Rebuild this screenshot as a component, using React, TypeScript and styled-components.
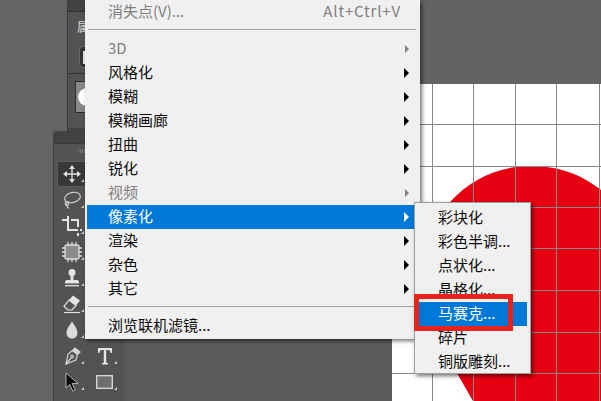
import React from 'react'
import styled, { createGlobalStyle } from 'styled-components'

const GlobalStyle = createGlobalStyle`
	html, body {
		margin: 0;
		padding: 0;
		background: #646464;
	}
	body {
		font-family: 'Noto Sans CJK SC', 'Liberation Sans', sans-serif;
	}
`

type MenuEntry = {
	label: string
	shortcut?: string
	disabled?: boolean
	arrow?: boolean
	active?: boolean
	divider?: boolean
}

const filterMenu: MenuEntry[] = [
	{ label: '消失点(V)...', shortcut: 'Alt+Ctrl+V', disabled: true },
	{ label: '', divider: true },
	{ label: '3D', disabled: true, arrow: true },
	{ label: '风格化', arrow: true },
	{ label: '模糊', arrow: true },
	{ label: '模糊画廊', arrow: true },
	{ label: '扭曲', arrow: true },
	{ label: '锐化', arrow: true },
	{ label: '视频', disabled: true, arrow: true },
	{ label: '像素化', arrow: true, active: true },
	{ label: '渲染', arrow: true },
	{ label: '杂色', arrow: true },
	{ label: '其它', arrow: true },
	{ label: '', divider: true },
	{ label: '浏览联机滤镜...' }
]

const pixelateMenu: MenuEntry[] = [
	{ label: '彩块化' },
	{ label: '彩色半调...' },
	{ label: '点状化...' },
	{ label: '晶格化...' },
	{ label: '马赛克...', active: true },
	{ label: '碎片' },
	{ label: '铜版雕刻...' }
]

const MoveIcon = () => (
	<svg width="20" height="20" viewBox="0 0 20 20" fill="#e0e0e0">
		<path d="M9.300 5h1.400v4.300H15v1.400h-4.300V15H9.300v-4.300H5V9.300h4.300z" />
		<path d="M10 1l3 4H7zM10 19l-3-4h6zM1 10l4-3v6zM19 10l-4 3V7z" />
	</svg>
)

const LassoIcon = () => (
	<svg width="20" height="20" viewBox="0 0 20 20" fill="none" stroke="#cfcfcf" strokeWidth="1.2">
		<ellipse cx="10.500" cy="7.500" rx="8" ry="5" transform="rotate(-14 10.500 7.500)" />
		<circle cx="5" cy="13.500" r="1.800" />
		<path d="M5 13c-1 2 0 4 2 5.500" />
	</svg>
)

const CropIcon = () => (
	<svg width="22" height="22" viewBox="0 0 22 22" fill="#e4e4e4">
		<path d="M1 4h5V1h2v13h9v2H6V6H1z" />
		<path d="M10 4h8v8h-2V6h-6zM16 18h2v3h-2zM19 14h2v2h-2z" />
	</svg>
)

const MarqueeIcon = () => (
	<svg width="20" height="20" viewBox="0 0 20 20">
		<rect x="3" y="3" width="14" height="14" rx="2" fill="#8c8c8c" />
		<rect x="3" y="3" width="14" height="14" rx="2" fill="none" stroke="#dedede" strokeWidth="1.300" />
		<path
			d="M0 6h3M0 10h3M0 14h3M17 6h3M17 10h3M17 14h3M6 0v3M10 0v3M14 0v3M6 17v3M10 17v3M14 17v3"
			stroke="#dedede"
			strokeWidth="1.300"
		/>
	</svg>
)

const StampIcon = () => (
	<svg width="20" height="20" viewBox="0 0 20 20" fill="#e4e4e4">
		<circle cx="10" cy="4.500" r="3.500" />
		<rect x="8.500" y="7" width="3" height="5" />
		<path d="M3 15.500v-1.500c0-1 .8-2 2-2h10c1.200 0 2 1 2 2v1.500z" />
		<rect x="3" y="17" width="14" height="1.300" />
	</svg>
)

const EraserIcon = () => (
	<svg width="22" height="22" viewBox="0 0 22 22">
		<path d="M12 2.500l7 5-4 5-7-5.500z" fill="#e4e4e4" />
		<path d="M8 7l7 5.500-4 4.500H7l-4-3.500z" fill="#555" stroke="#e4e4e4" strokeWidth="1.200" />
		<path d="M3 19.500h16" stroke="#e4e4e4" strokeWidth="1.100" />
	</svg>
)

const DropIcon = () => (
	<svg width="20" height="20" viewBox="0 0 20 20" fill="#dcdcdc">
		<path d="M10 1c1 3 5.500 7 5.500 12a5.500 5.500 0 0 1-11 0C4.500 8 9 4 10 1z" />
	</svg>
)

const PenIcon = () => (
	<svg width="20" height="20" viewBox="0 0 20 20" fill="none" stroke="#d4d4d4" strokeWidth="1.200">
		<path d="M13 2l5 4-2.500 2.500-5-4z" fill="#d4d4d4" />
		<path d="M10.500 4.500l5 4-1.500 5.500-10 4 2-10z" />
		<path d="M4 18l5-6" />
		<circle cx="10" cy="10.500" r="1.300" />
	</svg>
)

const TextIcon = () => (
	<svg width="22" height="22" viewBox="0 0 22 22" fill="#e4e4e4">
		<path d="M4 3h14v5h-1.300c-.3-2-1-3-3-3h-1.500v12c0 .8.400 1 1.800 1v1.500H8V18c1.400 0 1.800-.2 1.800-1V5H8.300c-2 0-2.700 1-3 3H4z" />
	</svg>
)

const PointerIcon = () => (
	<svg width="20" height="20" viewBox="0 0 20 20">
		<path d="M4 1v15l3.700-3.500 3 6.500 2.500-1.200-3-6.300H16z" fill="#0c0c0c" stroke="#e4e4e4" strokeWidth="0.700" />
	</svg>
)

const ShapeIcon = () => (
	<svg width="18" height="15" viewBox="0 0 18 15">
		<rect x="0.700" y="0.700" width="15.600" height="12.600" fill="#6e6e6e" stroke="#dcdcdc" strokeWidth="1.300" />
	</svg>
)

const CutOffIcon = () => (
	<svg width="8" height="22" viewBox="0 0 8 22" fill="#e4e4e4">
		<path d="M1 7c0-2 2-3 3-3s3 1 3 3v15H1z" />
	</svg>
)

const toolRows: [React.ReactNode, React.ReactNode][] = [
	[<MoveIcon />, null],
	[<LassoIcon />, null],
	[<CropIcon />, null],
	[<MarqueeIcon />, null],
	[<StampIcon />, null],
	[<EraserIcon />, null],
	[<DropIcon />, null],
	[<PenIcon />, <TextIcon />],
	[<PointerIcon />, <ShapeIcon />],
	[<CutOffIcon />, <CutOffIcon />]
]

const gridX = [432, 473, 515, 556, 599]
const gridY = [124, 166, 207, 248, 290, 332, 373]
const CANVAS_X = 392
const CANVAS_Y = 84

const CanvasArt = () => (
	<svg width="209" height="317" viewBox={`${CANVAS_X} ${CANVAS_Y} 209 317`}>
		<rect x={CANVAS_X} y={CANVAS_Y} width="209" height="317" fill="#ffffff" />
		<path
			d="M473 401 L458 375 C420 320 405 255 450 202 C472 178 500 166 531 166 C560 166 582 175 601 190 L601 401 Z"
			fill="#e60012"
		/>
		{gridX.map(x => (
			<line key={x} x1={x + 0.5} x2={x + 0.5} y1={CANVAS_Y} y2={401} stroke="#888" />
		))}
		{gridY.map(y => (
			<line key={y} y1={y + 0.5} y2={y + 0.5} x1={CANVAS_X} x2={601} stroke="#888" />
		))}
	</svg>
)

const renderItems = (items: MenuEntry[], showArrows: boolean) =>
	items.map((item, i) =>
		item.divider ? (
			<Divider key={i} />
		) : (
			<Item key={i} $active={item.active} $disabled={item.disabled}>
				<span>{item.label}</span>
				{item.shortcut && <Shortcut>{item.shortcut}</Shortcut>}
				{showArrows && item.arrow && (
					<Arrow $active={item.active} $disabled={item.disabled} />
				)}
			</Item>
		)
	)

export default function App() {
	return (
		<>
			<GlobalStyle />
			<Screen>
				<Gutter />
				<Middle>
					<TopPanel>
						<PanelHeader />
						<PanelBody>
							<PanelTitle>属</PanelTitle>
							<Toggle>
								<ToggleInner />
							</Toggle>
							<PanelRule />
							<Swatch>
								<SwatchDot />
							</Swatch>
						</PanelBody>
					</TopPanel>
					<LowerRow>
						<Toolbox>
							<ToolboxTitle />
							<GripRow>
								<Grip />
							</GripRow>
							<ToolGrid>
								{toolRows.map(([left, right], i) => (
									<React.Fragment key={i}>
										<Tool $selected={i === 0} $mark={i < 9}>
											{left}
										</Tool>
										<Tool $mark={!!right && i < 9} $wide>
											{right}
										</Tool>
									</React.Fragment>
								))}
							</ToolGrid>
						</Toolbox>
						<Pasteboard>
							<Frame />
						</Pasteboard>
					</LowerRow>
				</Middle>
				<CanvasColumn>
					<CanvasArt />
				</CanvasColumn>

				<Menu>{renderItems(filterMenu, true)}</Menu>
				<SubMenu>{renderItems(pixelateMenu, false)}</SubMenu>
				<Callout />
			</Screen>
		</>
	)
}

const Screen = styled.div`
	position: relative;
	display: flex;
	width: 601px;
	height: 401px;
	overflow: hidden;
	background: #646464;
`

const Gutter = styled.div`
	width: 53px;
	flex: none;
	background: #656565;
`

const Middle = styled.div`
	width: 339px;
	flex: none;
	display: flex;
	flex-direction: column;
`

const TopPanel = styled.div`
	height: 131px;
	margin-left: 14px;
	flex: none;
	border-left: 1px solid #3a3a3a;
	background: #535353;
	display: flex;
	flex-direction: column;
`

const PanelHeader = styled.div`
	height: 11px;
	flex: none;
	background: #424242;
	border-bottom: 1px solid #333;
`

const PanelBody = styled.div`
	flex: 1;
	padding: 7px 0 0 9px;
	display: flex;
	flex-direction: column;
	border-bottom: 3px solid #444;
`

const PanelTitle = styled.div`
	height: 16px;
	font-size: 12px;
	line-height: 16px;
	color: #dcdcdc;
`

const Toggle = styled.div`
	margin: 11px 0 0 2px;
	width: 16px;
	height: 22px;
	box-sizing: border-box;
	padding: 4px 0 0 3px;
	background: #333;
	border: 1px solid #6a6a6a;
	border-radius: 4px;
`

const ToggleInner = styled.div`
	width: 10px;
	height: 13px;
	background: #e8e8e8;
`

const PanelRule = styled.div`
	height: 1px;
	margin: 5px 0 0 -9px;
	background: #333;
`

const Swatch = styled.div`
	margin: 7px 0 0 -2px;
	width: 24px;
	height: 32px;
	box-sizing: border-box;
	background: #888;
	border: 1px solid #2c2c2c;
	display: flex;
	align-items: center;
	justify-content: center;
	flex-shrink: 0;
`

const SwatchDot = styled.div`
	width: 18px;
	height: 18px;
	flex: none;
	border-radius: 50%;
	background: #fff;
`

const LowerRow = styled.div`
	flex: 1;
	display: flex;
`

const Toolbox = styled.div`
	width: 71px;
	flex: none;
	background: #535353;
	border-left: 1px solid #3f3f3f;
	box-sizing: border-box;
	border-top-left-radius: 4px;
`

const ToolboxTitle = styled.div`
	height: 12px;
	background: #424242;
	border-bottom: 1px solid #383838;
	border-top-left-radius: 4px;
`

const GripRow = styled.div`
	height: 17px;
	box-sizing: border-box;
	padding: 5px 0 0 24px;
`

const Grip = styled.div`
	width: 8px;
	height: 4px;
	background: repeating-linear-gradient(90deg, #777 0 1px, transparent 1px 2px);
`

const ToolGrid = styled.div`
	display: grid;
	grid-template-columns: 30px 36px;
	grid-auto-rows: 26px;
	padding-left: 3px;
`

const Tool = styled.div<{ $selected?: boolean; $mark?: boolean; $wide?: boolean }>`
	position: relative;
	display: flex;
	align-items: center;
	justify-content: center;
	box-sizing: border-box;
	background: ${props => (props.$selected ? '#383838' : 'transparent')};
	border: 1px solid ${props => (props.$selected ? '#5e5e5e' : 'transparent')};
	border-radius: 3px;

	${props =>
		props.$mark &&
		`&::after {
			content: '';
			position: absolute;
			right: ${props.$wide ? '5px' : '2px'};
			bottom: 4px;
			border-left: 3px solid transparent;
			border-bottom: 3px solid #cfcfcf;
		}`}
`

const Pasteboard = styled.div`
	flex: 1;
	background: #5a5a5a;
`

const Frame = styled.div`
	width: 194px;
	height: 13px;
	box-sizing: border-box;
	background: #4a4a4a;
	border-bottom: 1px solid #383838;
	border-right: 1px solid #383838;
`

const CanvasColumn = styled.div`
	flex: 1;
	padding-top: 84px;
	background: #636363;
	line-height: 0;
`

const Menu = styled.div`
	position: absolute;
	left: 85px;
	top: 0;
	width: 335px;
	height: 339px;
	box-sizing: border-box;
	padding-left: 2px;
	padding-right: 2px;
	background: #f0f0f0;
	box-shadow: 2px 2px 4px rgba(0, 0, 0, 0.55);
`

const SubMenu = styled.div`
	position: absolute;
	left: 414px;
	top: 202px;
	width: 117px;
	height: 172px;
	box-sizing: border-box;
	padding: 3px 3px 0 4px;
	background: #f0f0f0;
	border: 1px solid #a0a0a0;
	box-shadow: 2px 2px 4px rgba(0, 0, 0, 0.55);
`

const Item = styled.div<{ $active?: boolean; $disabled?: boolean }>`
	position: relative;
	display: flex;
	align-items: center;
	justify-content: space-between;
	height: 24px;
	box-sizing: border-box;
	padding: 0 17px 2px 21px;
	font-size: 15px;
	line-height: 22px;
	white-space: nowrap;
	background: ${props => (props.$active ? '#0078d7' : 'transparent')};
	color: ${props =>
		props.$active ? '#ffffff' : props.$disabled ? '#7f7f7f' : '#0a0a0a'};

	${SubMenu} & {
		padding-left: 19px;
	}
`

const Shortcut = styled.span`
	letter-spacing: 0.85px;
`

const Arrow = styled.div<{ $active?: boolean; $disabled?: boolean }>`
	position: absolute;
	right: 9px;
	top: 50%;
	transform: translateY(-50%);
	width: 0;
	height: 0;
	border-style: solid;
	border-color: transparent;
	border-width: ${props => (props.$disabled ? '4px 0 4px 4px' : '5px 0 5px 5px')};
	border-left-color: ${props =>
		props.$active ? '#ffffff' : props.$disabled ? '#7f7f7f' : '#000000'};
`

const Divider = styled.div`
	height: 1px;
	margin: 5px 2px 7px 1px;
	background: #a0a0a0;
`

const Callout = styled.div`
	position: absolute;
	left: 414px;
	top: 294px;
	width: 99px;
	height: 37px;
	box-sizing: border-box;
	border: 5px solid #e8231c;
`
